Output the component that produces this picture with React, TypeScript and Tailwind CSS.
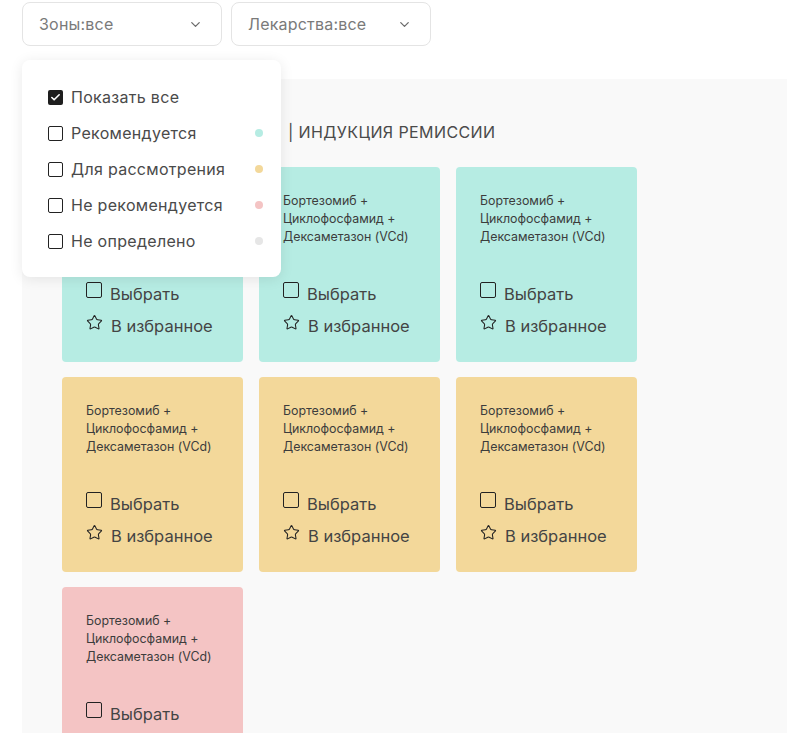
import { ChevronDown, Star, Check } from "lucide-react"

type Zone = "rec" | "cons" | "notrec"

const cards: Zone[] = ["rec", "rec", "rec", "cons", "cons", "cons", "notrec"]

const zoneBg: Record<Zone, string> = {
  rec: "bg-[#b6ece3]",
  cons: "bg-[#f3d89a]",
  notrec: "bg-[#f4c4c4]",
}

const filters = [
  { label: "Показать все", checked: true, dot: "" },
  { label: "Рекомендуется", checked: false, dot: "bg-[#b6ece3]" },
  { label: "Для рассмотрения", checked: false, dot: "bg-[#f3d89a]" },
  { label: "Не рекомендуется", checked: false, dot: "bg-[#f4c4c4]" },
  { label: "Не определено", checked: false, dot: "bg-[#e6e6e6]" },
]

function SelectBox({ label }: { label: string }) {
  return (
    <div className="w-[200px] h-[44px] rounded-lg border border-[#e4e4e4] bg-white flex items-center justify-between pl-4 pr-[18px]">
      <span className="text-[16px] tracking-[0.2px] text-[#7a7a7a]">{label}</span>
      <ChevronDown className="w-[15px] h-[15px] text-[#6b6b6b]" strokeWidth={2} />
    </div>
  )
}

function Card({ zone }: { zone: Zone }) {
  return (
    <div className={`h-[195px] rounded-[4px] ${zoneBg[zone]} flex flex-col px-6 pt-[25px] pb-[27px]`}>
      <p className="text-[12.4px] leading-[18px] text-[#3c3c3c]">
        Бортезомиб +
        <br />
        Циклофосфамид +
        <br />
        Дексаметазон (VCd)
      </p>
      <div className="mt-auto flex flex-col gap-[14px] text-[16.5px] text-[#444]">
        <div className="flex items-start gap-2 leading-[18px]">
          <span className="w-4 h-4 mt-[-3px] rounded-[2px] border-[1.5px] border-[#222]" />
          <span>Выбрать</span>
        </div>
        <div className="flex items-start gap-2 leading-[18px]">
          <Star className="w-[17px] h-[17px] mt-[-3px] text-[#222]" strokeWidth={1.5} />
          <span>В избранное</span>
        </div>
      </div>
    </div>
  )
}

export default function App() {
  return (
    <div className="relative h-[733px] bg-white font-['Inter',sans-serif] overflow-hidden">
      <div className="flex gap-[9px] pl-[22px] pt-[2px]">
        <SelectBox label="Зоны:все" />
        <SelectBox label="Лекарства:все" />
      </div>

      <div className="ml-[22px] mt-[33px] bg-[#f9f9f9] min-h-[660px] pl-10 pt-[42px]">
        <h2 className="text-[16px] tracking-[0.4px] text-[#4a4a4a] uppercase leading-[22px]">
          <span className="inline-block w-[226px]">Миелома</span>| Индукция ремиссии
        </h2>
        <div className="grid grid-cols-[181px_181px_181px] gap-x-4 gap-y-[15px] mt-[24px]">
          {cards.map((z, i) => (
            <Card key={i} zone={z} />
          ))}
        </div>
      </div>

      <div className="absolute left-[22px] top-[60px] w-[259px] h-[217px] rounded-lg bg-white shadow-[0_2px_14px_rgba(0,0,0,0.09)] pt-[26px] pl-[26px] pr-[18px]">
        <div className="flex flex-col gap-[14px]">
          {filters.map((f) => (
            <div key={f.label} className="flex items-center h-[22px]">
              {f.checked ? (
                <span className="w-[15px] h-[15px] rounded-[2px] bg-[#1e1e1e] flex items-center justify-center">
                  <Check className="w-[11px] h-[11px] text-white" strokeWidth={3.5} />
                </span>
              ) : (
                <span className="w-[15px] h-[15px] rounded-[2px] border-[1.5px] border-[#222]" />
              )}
              <span className="ml-2 text-[16px] tracking-[0.3px] text-[#4a4a4a]">{f.label}</span>
              {f.dot && <span className={`ml-auto w-2 h-2 rounded-full ${f.dot}`} />}
            </div>
          ))}
        </div>
      </div>
    </div>
  )
}
